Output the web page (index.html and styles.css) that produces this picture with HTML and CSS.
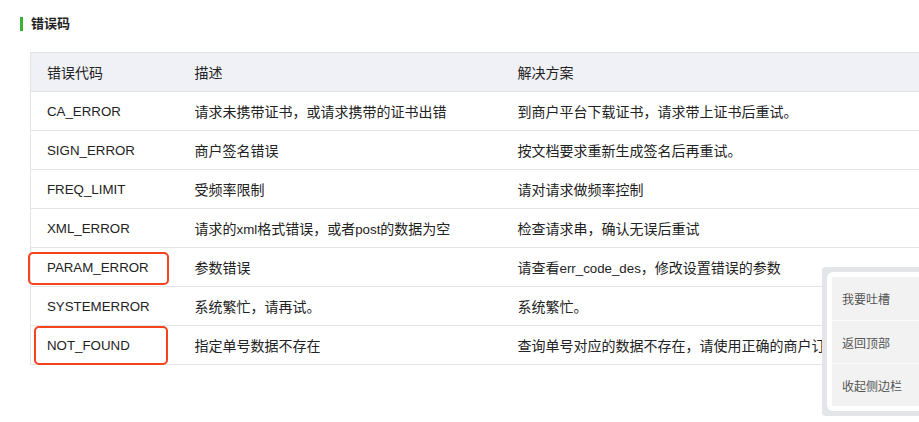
FILE: index.html
```html
<!DOCTYPE html>
<html lang="zh">
<head>
<meta charset="utf-8">
<link rel="stylesheet" href="styles.css">
</head>
<body>
<div class="page">
  <h3 class="title">错误码</h3>
  <table class="codes">
    <colgroup><col class="c1"><col class="c2"><col class="c3"></colgroup>
    <thead>
      <tr><th>错误代码</th><th>描述</th><th>解决方案</th></tr>
    </thead>
    <tbody>
      <tr><td class="en">CA_ERROR</td><td>请求未携带证书，或请求携带的证书出错</td><td>到商户平台下载证书，请求带上证书后重试。</td></tr>
      <tr><td class="en">SIGN_ERROR</td><td>商户签名错误</td><td>按文档要求重新生成签名后再重试。</td></tr>
      <tr><td class="en">FREQ_LIMIT</td><td>受频率限制</td><td>请对请求做频率控制</td></tr>
      <tr><td class="en">XML_ERROR</td><td>请求的<span class="en">xml</span>格式错误，或者<span class="en">post</span>的数据为空</td><td>检查请求串，确认无误后重试</td></tr>
      <tr><td class="en mark">PARAM_ERROR<span class="box box-a"></span></td><td>参数错误</td><td>请查看<span class="en">err_code_des</span>，修改设置错误的参数</td></tr>
      <tr><td class="en">SYSTEMERROR</td><td>系统繁忙，请再试。</td><td>系统繁忙。</td></tr>
      <tr><td class="en mark">NOT_FOUND<span class="box box-b"></span></td><td>指定单号数据不存在</td><td>查询单号对应的数据不存在，请使用正确的商户订单号</td></tr>
    </tbody>
  </table>
</div>
<div class="side">
  <div class="side-inner">
    <div class="side-item">我要吐槽</div>
    <div class="side-item">返回顶部</div>
    <div class="side-item">收起侧边栏</div>
  </div>
</div>
</body>
</html>
```

FILE: styles.css
```css
html, body {
  margin: 0;
  padding: 0;
  background: #fff;
  overflow: hidden;
}
body {
  font-family: "Liberation Sans", Arial, "Noto Sans CJK SC", sans-serif;
  font-size: 14px;
  color: #222;
}
.page {
  padding: 17px 0 0 20px;
  width: 1100px;
}
.title {
  margin: 0;
  font-size: 13px;
  font-weight: bold;
  line-height: 14px;
  color: #222;
  border-left: 3px solid #3cb034;
  padding-left: 8px;
  height: 14px;
}
.codes {
  margin: 21px 0 0 10px;
  border-collapse: collapse;
  table-layout: fixed;
  width: 1000px;
  border-left: 1px solid #e3e4e8;
}
.c1 { width: 148px; }
.c2 { width: 323px; }
.c3 { width: 529px; }
.codes th, .codes td {
  text-align: left;
  font-weight: normal;
  height: 38px;
  padding: 0 0 0 16px;
  border-top: 1px solid #e3e4e8;
  border-bottom: 1px solid #e3e4e8;
  white-space: nowrap;
  overflow: hidden;
  vertical-align: middle;
  color: #222;
}
.codes thead th {
  background: #f0f1f6;
}
.en {
  font-size: 13.3px;
}
.codes td.mark {
  position: relative;
  overflow: visible;
}
.box {
  position: absolute;
  border: 2px solid #f4431d;
  border-radius: 5px;
  box-sizing: border-box;
}
.box-a {
  left: -3px;
  top: 4px;
  width: 141px;
  height: 33px;
}
.box-b {
  left: 3px;
  top: 0px;
  width: 134px;
  height: 39px;
}
.side {
  position: absolute;
  left: 822px;
  top: 267px;
  width: 130px;
  height: 149px;
  background: #e4e5e9;
  border-radius: 4px;
  padding: 5px;
  box-sizing: border-box;
}
.side-inner {
  background: #fff;
  border-radius: 6px;
  padding: 5px;
  height: 139px;
  box-sizing: border-box;
}
.side-item {
  background: #f2f2f2;
  height: 43px;
  line-height: 43px;
  padding-left: 10px;
  font-size: 12px;
  color: #555;
  font-family: "Noto Sans CJK SC", sans-serif;
}
.side-item + .side-item {
  border-top: 1px solid #fafafa;
  height: 42px;
}
```
